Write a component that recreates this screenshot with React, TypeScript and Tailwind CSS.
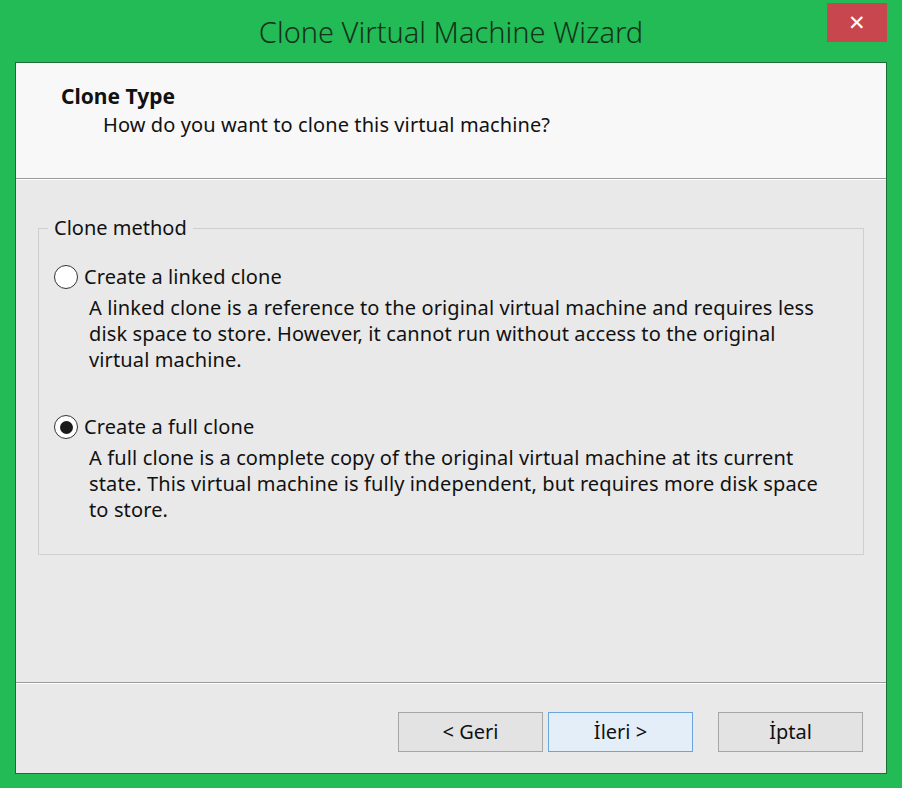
import React from 'react';

const font = { fontFamily: '"Noto Sans", "Open Sans", sans-serif' };

const Radio = ({ checked }: { checked: boolean }) => (
  <span className="flex h-[24px] w-[24px] shrink-0 items-center justify-center rounded-full border-[1.5px] border-[#333] bg-white">
    {checked && <span className="h-[13px] w-[13px] rounded-full bg-[#1a1a1a]" />}
  </span>
);

const Option = ({
  checked,
  label,
  lines,
}: {
  checked: boolean;
  label: string;
  lines: string[];
}) => (
  <div className="flex flex-col">
    <div className="flex h-[30px] items-center gap-[6px] pl-[15px]">
      <Radio checked={checked} />
      <span className="text-[20px] leading-[26px] tracking-[0.1px] text-[#111]">{label}</span>
    </div>
    <div className="mt-[3px] pl-[50px] text-[20px] leading-[26px] tracking-[0.13px] text-[#111]">
      {lines.map((l) => (
        <div key={l}>{l}</div>
      ))}
    </div>
  </div>
);

const WizButton = ({ label, focused }: { label: string; focused?: boolean }) => (
  <button
    className={`h-[40px] w-[145px] border text-[20px] leading-[26px] text-[#111] ${
      focused ? 'border-[#6aa6dc] bg-[#e4eef8]' : 'border-[#a6a6a6] bg-[#e3e3e3]'
    }`}
  >
    {label}
  </button>
);

export default function App() {
  return (
    <div className="flex h-[788px] w-[902px] flex-col bg-[#22bb55]" style={font}>
      {/* Title bar */}
      <div className="relative flex h-[62px] shrink-0 items-center justify-center">
        <span className="pt-[2px] text-[29px] font-light text-[#14331c]">Clone Virtual Machine Wizard</span>
        <div className="absolute right-[15px] top-[3px] flex h-[39px] w-[60px] items-center justify-center bg-[#c8474f] text-[21px] text-white">
          ✕
        </div>
      </div>

      {/* Client area */}
      <div className="mx-[15px] mb-[14px] flex flex-1 flex-col border border-[#1d6b37] bg-[#e9e9e9]">
        {/* Header */}
        <div className="flex h-[116px] shrink-0 flex-col border-b border-[#9c9c9c] bg-[#f8f8f8] pl-[45px] pt-[19px]">
          <span className="text-[21px] font-bold leading-[28px] text-[#111]">Clone Type</span>
          <span className="pl-[42px] pt-[2px] text-[20px] leading-[26px] tracking-[0.1px] text-[#111]">
            How do you want to clone this virtual machine?
          </span>
        </div>

        <div className="flex flex-1 flex-col border-t border-white px-[22px] pt-[48px]">
          {/* Group box */}
          <div className="relative flex h-[327px] flex-col gap-[39px] border border-[#cfcfcf] pt-[33px]">
            <span className="absolute left-[9px] top-[-14px] bg-[#e9e9e9] px-[6px] text-[20px] leading-[26px] text-[#111]">
              Clone method
            </span>
            <Option
              checked={false}
              label="Create a linked clone"
              lines={[
                'A linked clone is a reference to the original virtual machine and requires less',
                'disk space to store. However, it cannot run without access to the original',
                'virtual machine.',
              ]}
            />
            <Option
              checked
              label="Create a full clone"
              lines={[
                'A full clone is a complete copy of the original virtual machine at its current',
                'state. This virtual machine is fully independent, but requires more disk space',
                'to store.',
              ]}
            />
          </div>
        </div>

        {/* Footer */}
        <div className="shrink-0 border-t border-[#9c9c9c]">
          <div className="flex h-[90px] items-start justify-end border-t border-white pr-[23px] pt-[28px]">
            <WizButton label="< Geri" />
            <div className="ml-[5px]">
              <WizButton label="İleri >" focused />
            </div>
            <div className="ml-[25px]">
              <WizButton label="İptal" />
            </div>
          </div>
        </div>
      </div>
    </div>
  );
}
